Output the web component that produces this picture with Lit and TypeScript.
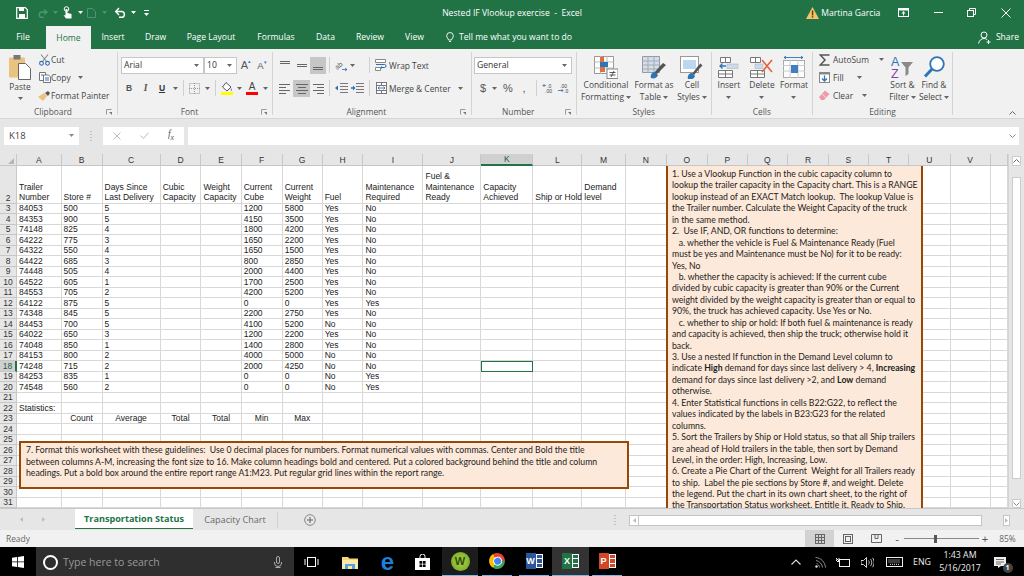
import { LitElement, html, css, svg } from "lit";
import { customElement } from "lit/decorators.js";

const ic = (w: number, h: number, body: unknown) =>
  html`<svg class="ic" width=${w} height=${h} viewBox="0 0 ${w} ${h}">${body}</svg>`;
const caret = (c = "#666") => ic(5, 3, svg`<path d="M0 0h5L2.5 3z" fill=${c}/>`);
const row = (items: [number, unknown][], cls = "") =>
  html`<div class="row ${cls}">${items.map(([w, c]) => html`<span class="slot" style="width:${w}px">${c}</span>`)}</div>`;
const tx = (t: string) => html`<span class="tx">${t}</span>`;
const vsep = html`<span class="vsep"></span>`;
const on = (c: unknown) => html`<span class="hi">${c}</span>`;

const lines3 = (ws: number[][]) =>
  ic(12, 11, svg`${ws.map(([y, x, w]) => svg`<rect x=${x} y=${y} width=${w} height="1" fill="#666"/>`)}`);
const aTop = lines3([[1, 1, 10], [3, 1, 10]]);
const aMid = lines3([[4, 1, 10], [6, 1, 10]]);
const aBot = lines3([[7, 1, 10], [9, 1, 10]]);
const aL = lines3([[1, 0, 11], [4, 0, 7], [7, 0, 11], [10, 0, 7]]);
const aC = lines3([[1, 0, 12], [4, 2, 8], [7, 0, 12], [10, 2, 8]]);
const aR = lines3([[1, 1, 11], [4, 5, 7], [7, 1, 11], [10, 5, 7]]);

const I = {
  save: ic(12, 12, svg`<path d="M.7.7h8.6l2 2v8.6H.7z" fill="none" stroke="#fff" stroke-width="1.2"/><rect x="3" y="1" width="5" height="3" fill="#fff"/><rect x="3" y="7" width="6" height="4" fill="#fff"/>`),
  redo: ic(11, 10, svg`<path d="M8 4H4a2.7 2.7 0 0 0 0 5.400h2M6 1.500 9 4 6 6.500" fill="none" stroke="#4e9474" stroke-width="1.300"/>`),
  undo: ic(12, 11, svg`<path d="M2 4.500h5.500a2.900 2.900 0 0 1 0 5.800H5M5 1 1.700 4.500 5 8" fill="none" stroke="#fff" stroke-width="1.400"/>`),
  touch: ic(11, 13, svg`<circle cx="4.500" cy="3" r="2.300" fill="none" stroke="#fff" stroke-width="1"/><path d="M3.500 3h2v4l4 1v4.500H4L1.500 9l2 .5z" fill="#fff"/>`),
  doc: ic(9, 10, svg`<path d="M.5.500h5l3 3v6h-8z" fill="none" stroke="#4e9474"/>`),
  custom: ic(5, 6, svg`<rect width="5" height="1" fill="#fff"/><path d="M0 3h5L2.500 6z" fill="#fff"/>`),
  warn: ic(13, 12, svg`<path d="M6.500 0 13 12H0z" fill="#f5c36b"/><rect x="5.800" y="3.500" width="1.500" height="5" fill="#5a4300"/><rect x="5.800" y="9.200" width="1.500" height="1.500" fill="#5a4300"/>`),
  disp: ic(11, 9, svg`<rect x=".5" y=".5" width="10" height="8" fill="none" stroke="#fff"/><rect x="1" y="1" width="9" height="1.500" fill="#fff"/><path d="M5.500 3 3.500 5.500h1.500v2h1v-2h1.500z" fill="#fff"/>`),
  min: ic(9, 1, svg`<rect width="9" height="1" fill="#fff"/>`),
  rest: ic(9, 9, svg`<rect x=".5" y="2.500" width="6" height="6" fill="none" stroke="#fff"/><path d="M2.500 2.500v-2h6v6h-2" fill="none" stroke="#fff"/>`),
  close: ic(10, 10, svg`<path d="M.5.500l9 9M9.500.500l-9 9" stroke="#fff" fill="none"/>`),
  bulb: ic(8, 11, svg`<path d="M2.500 8C2.300 6.500.7 5.800.7 3.800a3.300 3.300 0 0 1 6.600 0C7.300 5.800 5.700 6.500 5.500 8zM3 9.500h2" fill="none" stroke="#fff" stroke-width=".9"/>`),
  share: ic(14, 13, svg`<circle cx="6" cy="4" r="3" fill="none" stroke="#fff"/><path d="M.6 12.500C1 9.500 3.500 7.500 6 7.500c1.200 0 2.300.4 3.200 1.100M10.500 9v4M8.500 11h4" fill="none" stroke="#fff"/>`),
  paste: ic(22, 25, svg`<rect x="0" y="2.500" width="16" height="20" rx="1" fill="#eac37f"/><rect x="4.500" y="0" width="7" height="4.500" fill="#777"/><path d="M9.500 8.500h7l5 5v11h-12z" fill="#fff" stroke="#666"/>`),
  cut: ic(11, 12, svg`<path d="M2 .5l5.500 7M9 .5 3.500 7.500" stroke="#8a8a8a" fill="none" stroke-width="1.100"/><circle cx="2.500" cy="9.300" r="1.900" fill="none" stroke="#2a6fb5" stroke-width="1.100"/><circle cx="8.500" cy="9.300" r="1.900" fill="none" stroke="#2a6fb5" stroke-width="1.100"/>`),
  copy: ic(12, 11, svg`<path d="M.5.500h6v8h-6z" fill="#fff" stroke="#777"/><path d="M4.500 3h5l2 2v5.500h-7z" fill="#fff" stroke="#777"/><path d="M2 3h2M6 6h4M6 8h4" stroke="#2a6fb5"/>`),
  brush: ic(13, 11, svg`<path d="M0 7 6 3l3 3-4 5z" fill="#e8c27e"/><path d="M7 3l3-2 2 2-2 3z" fill="#555"/>`),
  borders: ic(11, 11, svg`<rect x=".5" y=".5" width="10" height="10" fill="none" stroke="#999" stroke-dasharray="1 1"/><path d="M5.500 0v11M0 5.500h11" stroke="#999" stroke-dasharray="1 1"/>`),
  fill: ic(12, 14, svg`<path d="M5 1.500 1.500 6 6 10l4-4z" fill="#fff" stroke="#555"/><path d="M10 7c1 1.500 1.300 2.500.5 3-.8-.500-1-1.500-.5-3z" fill="#777"/><rect y="11" width="12" height="3" fill="#ffff00"/>`),
  red: ic(12, 3, svg`<rect width="12" height="3" fill="#f00"/>`),
  orient: ic(18, 18, svg`<text x="3" y="12" font-size="7" font-family="Liberation Sans" fill="#555" transform="rotate(-40 7 10)">ab</text><path d="M10 13.500h5M13 12l2 1.500-2 1.500" stroke="#2a6fb5" fill="none" stroke-width=".8"/>`),
  wrap: ic(12, 12, svg`<path d="M.5.500h10v3H.5zM.5 8.500h5v3h-5z" fill="#fff" stroke="#888"/><path d="M1 5.500h8.500a1.500 1.500 0 0 1 0 3H6" stroke="#2a6fb5" fill="none"/><path d="M7 7 5.200 8.500 7 10z" fill="#2a6fb5"/>`),
  merge: ic(11, 12, svg`<rect x=".5" y=".5" width="10" height="11" fill="#fff" stroke="#777"/><path d="M0 3.500h11M0 8.500h11M5.500 0v3.500M5.500 8.500V12" stroke="#777"/><path d="M2 6h7M3.500 4.700 2 6l1.500 1.300M7.500 4.700 9 6 7.500 7.300" stroke="#2a6fb5" fill="none" stroke-width=".9"/>`),
  indL: ic(13, 10, svg`<path d="M5 .5h8M5 3.500h8M5 6.500h8M5 9.500h8" stroke="#777"/><path d="M0 5l3-2.500v5z" fill="#2a6fb5"/>`),
  indR: ic(13, 10, svg`<path d="M5 .5h8M5 3.500h8M5 6.500h8M5 9.500h8" stroke="#777"/><path d="M0 4.300h2V2.500L4.500 5 2 7.500V5.700H0z" fill="#2a6fb5"/>`),
  decL: ic(13, 14, svg`<text x="5" y="6.500" font-size="5" font-family="Liberation Sans" fill="#444">.0</text><text x="3" y="12" font-size="5" font-family="Liberation Sans" fill="#444">.00</text><path d="M1 4.500h3M2.500 3 1 4.500 2.500 6" stroke="#2a6fb5" fill="none" stroke-width=".8"/>`),
  decR: ic(13, 14, svg`<text x="3" y="6.500" font-size="5" font-family="Liberation Sans" fill="#444">.00</text><text x="7" y="12" font-size="5" font-family="Liberation Sans" fill="#444">.0</text><path d="M1 9.500h5M4.500 8 6 9.500 4.500 11" stroke="#2a6fb5" fill="none" stroke-width=".8"/>`),
  cond: ic(24, 23, svg`<path d="M.5.500h19v17H.5z" fill="#fff" stroke="#999"/><path d="M.5 6h19M.5 12h19M6.500 0v18M13 0v18" stroke="#bbb"/><rect x="6" y="1" width="4" height="5" fill="#e2703a"/><rect x="6" y="6" width="8" height="5" fill="#2e75b6"/><rect x="6" y="11" width="5" height="5" fill="#e2703a"/><rect x="13" y="13" width="11" height="9.500" fill="#fff" stroke="#888"/><path d="M15.500 16.500h6M15.500 19h6M20 15l-3 6" stroke="#333" fill="none" stroke-width=".8"/>`),
  table: ic(24, 23, svg`<path d="M.5.500h17v16H.5z" fill="#cfdff0" stroke="#999"/><path d="M.5 5h17M.5 9h17M.5 13h17M6 0v17M12 0v17" stroke="#a9a9a9"/><path d="M12 17l6-7 3-3 3 2-3 3-6 6z" fill="#555"/><path d="M9 22c-1-3 1-6 4-6l3 3c-1 3-4 4-7 3z" fill="#2e75b6"/>`),
  cells: ic(23, 23, svg`<rect x=".5" y=".5" width="18" height="16" fill="#fff" stroke="#999"/><rect x="3" y="4" width="13" height="9" fill="#bdd7ee"/><path d="M12 18l6-8 2.500-2.500 2 2L20 12l-6 7z" fill="#555"/><path d="M8 23c-1-3 1-6 4-6l3 3c-1 3-4 4-7 3z" fill="#2e75b6"/>`),
  insert: ic(21, 22, svg`<path d="M2.500 1.500h10v5h-10zM7.500 1.500v5M.5 14.500h14v7H.5zM.5 18h14M7.500 14.500v7" fill="#fff" stroke="#777"/><rect x="9" y="8" width="11" height="4.500" fill="#c9dcef" stroke="#aaa" stroke-width=".5"/><path d="M2 10h6M4.500 7.500 2 10l2.500 2.500" stroke="#2e75b6" fill="none" stroke-width="1.300"/>`),
  del: ic(23, 22, svg`<path d="M.5 1.500h10v5H.5zM5.500 1.500v5M.5 14.500h14v7H.5zM.5 18h14M7.500 14.500v7" fill="#fff" stroke="#777"/><rect x="5" y="8" width="8" height="4.500" fill="#c9dcef" stroke="#aaa" stroke-width=".5"/><path d="M12 4l10 12M22 4 12 16" stroke="#e2603a" stroke-width="1.500" fill="none"/>`),
  fmt: ic(22, 23, svg`<rect x=".5" y="4.500" width="21" height="17" fill="#fff" stroke="#aaa"/><path d="M7 4v18M15 4v18M0 9.500h22M0 15h22" stroke="#ccc"/><rect x="8" y="9" width="7" height="8" fill="#3f7fbf"/><path d="M1 1.500h19M3 .2 1 1.500 3 2.800M18 .2l2 1.300-2 1.300" stroke="#2e75b6" fill="none" stroke-width=".9"/>`),
  sigma: ic(11, 12, svg`<path d="M10.500 1H1.200L6 6l-4.800 5h9.300" fill="none" stroke="#555" stroke-width="1.500"/>`),
  fillI: ic(11, 11, svg`<rect x=".5" y=".5" width="10" height="10" fill="#fff" stroke="#888"/><rect x=".5" y=".5" width="10" height="2" fill="#888"/><path d="M5.500 3.500v5M3 6.500l2.500 2.500L8 6.500" stroke="#2e75b6" fill="none" stroke-width="1.300"/>`),
  clear: ic(11, 10, svg`<path d="M0 7 6 .5 10.500 4 5 10H2z" fill="#ee9aa8"/><path d="M3 4l4 3.500" stroke="#fff" fill="none" stroke-width=".6"/>`),
  sort: ic(23, 28, svg`<text x="0" y="13" font-size="12.500" font-family="Liberation Sans" fill="#2e75b6">A</text><text x="0" y="25" font-size="12.500" font-family="Liberation Sans" fill="#8a3fb0">Z</text><path d="M10 9h12l-4.500 5.500V21L14.500 23v-8.500z" fill="#8a8a8a"/>`),
  find: ic(22, 23, svg`<circle cx="14" cy="8" r="6.800" fill="#fff" stroke="#2e75b6" stroke-width="1.800"/><path d="M9 13 2 20.500" stroke="#2e75b6" stroke-width="3"/>`),
  launch: ic(6, 6, svg`<path d="M.5 5.500V.5h5" fill="none" stroke="#999"/><path d="M3 3l3 3V3z" fill="#777"/>`),
  up: ic(7, 4, svg`<path d="M.5 3.500l3-3 3 3" fill="none" stroke="#666"/>`),
  down: ic(7, 4, svg`<path d="M.5.500l3 3 3-3" fill="none" stroke="#888"/>`),
  x: ic(8, 8, svg`<path d="M.5.500l7 7M7.500.500l-7 7" stroke="#bbb" fill="none"/>`),
  check: ic(9, 7, svg`<path d="M.5 3.500 3.500 6.500 8.500.5" stroke="#bbb" fill="none"/>`),
  dots: ic(2, 10, svg`<path d="M1 0v10" stroke="#999" stroke-dasharray="1 2"/>`),
  plusC: ic(12, 12, svg`<circle cx="6" cy="6" r="5.300" fill="none" stroke="#888"/><path d="M3 6h6M6 3v6" stroke="#666"/>`),
  la: ic(3, 5, svg`<path d="M3 0v5L0 2.500z" fill="#bbb"/>`),
  ra: ic(3, 5, svg`<path d="M0 0v5l3-2.500z" fill="#bbb"/>`),
  grid: ic(10, 10, svg`<rect x=".5" y=".5" width="9" height="9" fill="none" stroke="#666"/><path d="M3.500 0v10M6.500 0v10M0 3.500h10M0 6.500h10" stroke="#666"/>`),
  page: ic(10, 10, svg`<rect x=".5" y=".5" width="9" height="9" fill="none" stroke="#666"/><rect x="2.500" y="2.500" width="5" height="5" fill="none" stroke="#666"/>`),
  brk: ic(11, 10, svg`<path d="M.5.500h10v8H.5zM4 .5v4h3v-4" fill="none" stroke="#666"/>`),
  win: ic(12, 12, svg`<path d="M0 1.700 5 1v4.500H0zM5.800.9 12 0v5.500H5.800zM0 6.300h5v4.700L0 10.300zM5.800 6.300H12V12l-6.200-.9z" fill="#fff"/>`),
  mic: ic(8, 12, svg`<rect x="2.500" y=".5" width="3" height="7" rx="1.500" fill="none" stroke="#aaa"/><path d="M.5 6v1a3.500 3.500 0 0 0 7 0V6M4 10.500V12M1.500 11.500h5" fill="none" stroke="#aaa"/>`),
  taskv: ic(15, 10, svg`<rect x="3.500" y=".5" width="8" height="9" fill="none" stroke="#fff"/><path d="M1 2v6M14 2v6" stroke="#fff" stroke-width="1"/>`),
  folder: ic(16, 13, svg`<path d="M0 1h6l1.500 1.500H16V13H0z" fill="#f5d67b"/><path d="M0 4h16v9H0z" fill="#ffe9a8"/><path d="M3 8h10v5H3z" fill="#4fa7e0"/><path d="M6 10h4v3H6z" fill="#ffe9a8"/>`),
  store: ic(15, 16, svg`<path d="M5 4V2.500a2.500 2.500 0 0 1 5 0V4" fill="none" stroke="#fff"/><path d="M0 4h15v12H0z" fill="#fff"/><path d="M4.500 7h2.700v2.700H4.500zM7.900 7h2.700v2.700H7.900zM4.500 10.400h2.700v2.700H4.500zM7.900 10.400h2.700v2.700H7.900z" fill="#000"/>`),
  upw: ic(10, 6, svg`<path d="M.5 5.500 5 1l4.500 4.500" fill="none" stroke="#ddd" stroke-width="1.100"/>`),
  wifi: ic(13, 12, svg`<path d="M11.500 11.500C11 6 7 1.700 1.500 1.500M8.500 11.500C8 8 5.500 5 2 4.500M5.500 11.500C5.300 9.500 4 8 2.500 7.500" fill="none" stroke="#8a8a8a"/><circle cx="2.500" cy="10.500" r="1.200" fill="#ddd"/>`),
  batt: ic(14, 10, svg`<rect x="3.500" y="2.500" width="10" height="7" fill="none" stroke="#eee"/><path d="M0 1l3 3-1 1L0 3zM3 1v4" stroke="#eee" fill="none"/>`),
  spk: ic(13, 11, svg`<path d="M0 3.500h2.500L5.500.5v10l-3-3H0z" fill="none" stroke="#eee" stroke-width=".9"/><path d="M7.500 3.500c1 1.200 1 2.800 0 4M9.500 2c1.700 2 1.700 5 0 7M11.500.8c2.200 2.800 2.200 6.600 0 9.400" fill="none" stroke="#eee" stroke-width=".8"/>`),
  kbd: ic(17, 10, svg`<rect x=".5" y=".5" width="16" height="9" fill="none" stroke="#eee"/><path d="M2.500 3h12M2.500 5h12M4 7.300h9" stroke="#eee" stroke-dasharray="1 1"/>`),
  notif: ic(13, 11, svg`<path d="M0 0h12v9H7l-3 2V9H0z" fill="#eee"/><path d="M2 2.500h8M2 5h8M2 7h5" stroke="#333" stroke-width=".7"/>`),
};

const ROWS = `84053 500 5 1200 5800 Yes No
84353 900 5 4150 3500 Yes No
74148 825 4 1800 4200 Yes No
64222 775 3 1650 2200 Yes No
64322 550 4 1650 1500 Yes No
64422 685 3 800 2850 Yes No
74448 505 4 2000 4400 Yes No
64522 605 1 1700 2500 Yes No
84553 705 2 4200 5200 Yes No
64122 875 5 0 0 Yes Yes
74348 845 5 2200 2750 Yes No
84453 700 5 4100 5200 No No
64022 650 3 1200 2200 Yes No
74048 850 1 1400 2800 Yes No
84153 800 2 4000 5000 No No
74248 715 2 2000 4250 No No
84253 835 1 0 0 No Yes
74548 560 2 0 0 No Yes`.split("\n").map((l) => l.split(" "));

const COLS = "A B C D E F G H I J K L M N O P Q R S T U V".split(" ").concat("");
const HEAD: Record<string, string> = {
  A: "Trailer\nNumber", B: "Store #", C: "Days Since\nLast Delivery", D: "Cubic\nCapacity", E: "Weight\nCapacity",
  F: "Current\nCube", G: "Current\nWeight", H: "Fuel", I: "Maintenance\nRequired", J: "Fuel &\nMaintenance\nReady",
  K: "Capacity\nAchieved", L: "Ship or Hold", M: "Demand\nlevel",
};
const STATS: Record<string, string> = { B: "Count", C: "Average", D: "Total", E: "Total", F: "Min", G: "Max" };
const DATA_COLS = ["A", "B", "C", "F", "G", "H", "I"];

const NOTE_RIGHT: unknown[] = [
  "1. Use a Vlookup Function in the cubic capacity column to",
  "lookup the trailer capacity in the Capacity chart. This is a RANGE",
  "lookup instead of an EXACT Match lookup.  The lookup Value is",
  "the Trailer number. Calculate the Weight Capacity of the truck",
  "in the same method.",
  "2.  Use IF, AND, OR functions to determine:",
  "   a. whether the vehicle is Fuel & Maintenance Ready (Fuel",
  "must be yes and Maintenance must be No) for it to be ready:",
  "Yes, No",
  "   b. whether the capacity is achieved: If the current cube",
  "divided by cubic capacity is greater than 90% or the Current",
  "weight divided by the weight capacity is greater than or equal to",
  "90%, the truck has achieved capacity. Use Yes or No.",
  "   c. whether to ship or hold: If both fuel & maintenance is ready",
  "and capacity is achieved, then ship the truck; otherwise hold it",
  "back.",
  "3. Use a nested If function in the Demand Level column to",
  html`indicate <b>High</b> demand for days since last delivery > 4, <b>Increasing</b>`,
  html`demand for days since last delivery >2, and <b>Low</b> demand`,
  "otherwise.",
  "4. Enter Statistical functions in cells B22:G22, to reflect the",
  "values indicated by the labels in B23:G23 for the related",
  "columns.",
  "5. Sort the Trailers by Ship or Hold status, so that all Ship trailers",
  "are ahead of Hold trailers in the table, then sort by Demand",
  "Level, in the order: High, Increasing, Low.",
  "6. Create a Pie Chart of the Current  Weight for all Trailers ready",
  "to ship.  Label the pie sections by Store #, and weight. Delete",
  "the legend. Put the chart in its own chart sheet, to the right of",
  "the Transportation Status worksheet. Entitle it, Ready to Ship.",
];
const NOTE_BOTTOM = [
  "7. Format this worksheet with these guidelines:  Use 0 decimal places for numbers. Format numerical values with commas. Center and Bold the title",
  "between columns A-M, increasing the font size to 16. Make column headings bold and centered. Put a colored background behind the title and column",
  "headings. Put a bold box around the entire report range A1:M23. Put regular grid lines within the report range.",
];

@customElement("app-root")
export class AppRoot extends LitElement {
  static styles = css`
    * { box-sizing: border-box; }
    :host { display: flex; flex-direction: column; width: 1024px; height: 576px; overflow: hidden; background: #f1f1f1;
      font-family: "Open Sans", "Noto Sans", sans-serif; font-size: 8.4px; color: #444; }
    .ic { display: block; flex: none; }
    .row { display: flex; align-items: center; }
    .slot { display: flex; align-items: center; justify-content: center; flex: none; height: 100%; }
    .tx { margin-right: auto; white-space: nowrap; }
    .vsep { width: 1px; height: 16px; background: #d0d0d0; }

    .title { height: 25px; background: #217346; color: #fff; display: grid; grid-template-columns: 1fr auto 1fr; align-items: center; font-size: 8.6px; }
    .title .row { height: 25px; }
    .title .doc { white-space: pre; }
    .title-r { justify-content: flex-end; }
    .tabs { height: 24px; background: #217346; color: #fff; display: flex; align-items: flex-end; font-size: 8.6px; }
    .tab { height: 24px; flex: none; display: flex; align-items: center; justify-content: center; }
    .tab.home { background: #f1f1f1; color: #217346; height: 23px; }
    .tell { flex: 1; display: flex; align-items: center; height: 24px; }
    .tell .bulb { margin: 0 5px 0 12px; }
    .share { display: flex; align-items: center; height: 24px; gap: 4px; padding-right: 5px; }

    .ribbon { height: 70px; flex: none; background: #f1f1f1; border-bottom: 1px solid #d6d6d6; padding-top: 3px; display: flex; }
    .group { height: 63px; border-right: 1px solid #d4d4d4; flex: none; display: flex; flex-direction: column; }
    .gbody { height: 54px; flex: none; display: flex; }
    .glabel { height: 9px; display: flex; line-height: 12px; color: #555; }
    .glabel span { flex: 1; text-align: center; }
    .glabel .launch { flex: none; width: 11px; height: 12px; display: flex; align-items: center; }
    .pastecol { width: 38px; padding-left: 2px; display: flex; flex-direction: column; align-items: center; padding-top: 3px; flex: none; }
    .pastecol .t { line-height: 12px; margin-top: 1px; }
    .pastecol .c { margin-top: 4px; }
    .stack { display: flex; flex-direction: column; gap: 2.75px; }
    .stack .row { height: 15px; }
    .two { padding-top: 5px; display: flex; flex-direction: column; gap: 6.5px; }
    .two .row { height: 16.500px; }
    .combo { height: 16.500px; background: #fff; border: 1px solid #c6c6c6; display: flex; align-items: center; justify-content: space-between; padding: 0 4px 0 2px; color: #333; flex: none; font-size: 8.6px; }
    .hi { background: #c6c6c6; align-self: stretch; width: 100%; display: flex; align-items: center; justify-content: center; }
    .b { font-family: "Liberation Sans", sans-serif; font-weight: 700; font-size: 8.5px; color: #555; }
    .i { font-family: "Liberation Serif", serif; font-style: italic; font-weight: 700; font-size: 9.5px; color: #555; }
    .u { font-family: "Liberation Sans", sans-serif; text-decoration: underline; font-size: 8.5px; color: #333; font-weight: 700; }
    .bigA { font-family: "Liberation Sans", sans-serif; font-size: 11px; color: #555; display: flex; align-items: flex-start; }
    .bigA.s { font-size: 9.5px; }
    .bigA i { font-style: normal; font-size: 5px; line-height: 5px; color: #2e75b6; }
    .colA { display: flex; flex-direction: column; align-items: center; font-family: "Liberation Sans", sans-serif; font-size: 10px; line-height: 10px; color: #444; }
    .num { font-size: 11px; color: #555; font-family: "Liberation Sans", sans-serif; }
    .big { flex: none; display: flex; flex-direction: column; align-items: center; padding-top: 3px; }
    .big .ico { height: 24px; display: flex; align-items: center; }
    .big .t { line-height: 12px; white-space: nowrap; display: flex; align-items: center; gap: 2px; min-height: 12px; }
    .collapse { flex: 1; display: flex; justify-content: flex-end; align-items: flex-end; padding: 0 8px 3px 0; height: 66px; }

    .fbar { height: 35px; flex: none; background: #e6e6e6; padding-top: 7.500px; display: flex; align-items: flex-start; }
    .fbox { height: 18.500px; background: #fff; flex: none; display: flex; align-items: center; }
    .namebox { margin-left: 4px; width: 75px; justify-content: space-between; padding: 0 5px; font-size: 9.5px; color: #444; }
    .dots { width: 24px; height: 18.500px; display: flex; align-items: center; justify-content: center; flex: none; }
    .fxbox { width: 81px; }
    .fxbox span.fx { font-family: "Liberation Serif", serif; font-style: italic; font-size: 9.5px; color: #555; }
    .input { flex: 1; margin: 0 5px 0 3.500px; justify-content: flex-end; padding-right: 3px; }

    .sheet { height: 354px; flex: none; display: flex; background: #fff; }
    .gridwrap { position: relative; width: 1008px; height: 354px; overflow: hidden; flex: none; }
    .grid { display: grid; width: 1008px; height: 354px;
      grid-template-columns: 17px 44.5px 41px 58.2px 40.8px 40.2px 41px 40px 40.8px 60px 57.8px 52px 49px 43.7px 40.7px 41.3px 39.7px 40.6px 40.7px 40px 40.3px 41.4px 40px 17.3px;
      grid-template-rows: 12px 37.5px repeat(29, 10.5px);
      font-family: "Liberation Sans", Arial, sans-serif; font-size: 8.5px; color: #222; }
    .cell { border-right: 1px solid #d8d8d8; border-bottom: 1px solid #d8d8d8; padding-left: 2px; display: flex; align-items: center; white-space: nowrap; line-height: 10.5px; min-width: 0; }
    .cell.h2 { align-items: flex-end; white-space: pre; }
    .cell.ctr { justify-content: center; padding-left: 0; }
    .ch { background: #e6e6e6; border-right: 1px solid #c8c8c8; border-bottom: 1px solid #c6c6c6; display: flex; align-items: center; justify-content: center; color: #333; line-height: 10px; }
    .ch.act { background: #d0d0d0; border-bottom: 2px solid #217346; color: #1d5c3a; }
    .rh { background: #e6e6e6; border-right: 1px solid #c8c8c8; border-bottom: 1px solid #c6c6c6; display: flex; align-items: center; justify-content: center; color: #333; line-height: 10px; }
    .rh.h2 { align-items: flex-end; }
    .rh.act { background: #d0d0d0; border-right: 2px solid #217346; color: #1d5c3a; }
    .sel { outline: 1.500px solid #217346; outline-offset: -1px; position: relative; }
    .corner { padding: 3px 2px 0 0; justify-content: flex-end; }
    .note { position: absolute; background: #fde9d9; border: 2px solid #974706; font-family: Lato, "Open Sans", sans-serif; font-size: 8.7px; color: #222; white-space: pre; }
    .note.right { left: 666px; top: 12px; width: 257px; height: 342px; border-top: none; border-bottom: none; padding: 2px 0 0 4px; line-height: 11.440px; }
    .note.right div:last-child { line-height: 9px; }
    .note.bottom { left: 19px; top: 287px; width: 610px; height: 48px; padding: 1.200px 0 0 5px; line-height: 11.600px; }
    .note b { font-weight: 700; }
    .vscroll { width: 16px; flex: none; background: #e6e6e6; border-left: 1px solid #d4d4d4; padding: 2px 3px 0 3px; display: flex; flex-direction: column; }
    .vbtn { height: 10px; background: #fff; border: 1px solid #ccc; display: flex; align-items: center; justify-content: center; flex: none; }
    .vthumb { margin-top: 11px; height: 302px; background: #fff; border: 1px solid #ccc; flex: none; }
    .vgap { flex: 1; }
    .vbtn.last { margin-bottom: 0; height: 9px; }

    .tabsbar { height: 22px; flex: none; background: #e6e6e6; border-top: 1px solid #c8c8c8; display: flex; align-items: stretch; }
    .sheettab { flex: none; display: flex; align-items: center; justify-content: center; font-size: 9.100px; white-space: nowrap; color: #666; }
    .sheettab.on { background: #fff; color: #217346; font-weight: 700; height: 19.500px; border-bottom: 1.500px solid #217346; }
    .hs { margin-top: 6px; height: 11px; display: flex; flex: none; width: 381px; margin-left: 0; }
    .hbtn { background: #fff; border: 1px solid #c4c4c4; width: 10px; display: flex; align-items: center; justify-content: center; flex: none; }
    .htrack { width: 343px; background: #fff; border: 1px solid #c4c4c4; border-left: none; flex: none; }
    .hgap { flex: 1; }
    .status { height: 17px; flex: none; background: #f1f1f1; display: flex; align-items: center; color: #666; padding-left: 6px; }
    .status .ready { flex: 1; }
    .status .row { height: 17px; }
    .view { height: 17px; }
    .view.on { background: #d2d2d2; }
    .slider { width: 75px; height: 1px; background: #888; display: flex; align-items: center; }
    .thumb { width: 3px; height: 8px; background: #555; margin-left: 30px; flex: none; }
    .pm { font-size: 11px; color: #555; font-family: "Liberation Sans", sans-serif; }

    .task { height: 30px; flex: none; background: #000; display: flex; align-items: stretch; color: #fff; }
    .start { width: 36px; display: flex; align-items: center; justify-content: center; flex: none; }
    .search { width: 258px; background: #2f2f2f; display: flex; align-items: center; padding-left: 7px; flex: none; color: #999; font-size: 11px; }
    .ring { width: 15px; height: 15px; border: 2px solid #fff; border-radius: 50%; margin-right: 5px; flex: none; }
    .search .stext { flex: 1; font-family: "Open Sans", sans-serif; font-size: 10.500px; white-space: nowrap; }
    .search .m { width: 28px; display: flex; justify-content: center; flex: none; margin-right: 2px; }
    .tb { flex: none; display: flex; align-items: center; justify-content: center; }
    .tb.run { border-bottom: 2px solid #76b9ed; }
    .tb.w { background: #1c1c1c; }
    .tb.x { background: #333; }
    .gap { flex: none; }
    .edge { font-family: "Liberation Sans", sans-serif; font-size: 24px; font-weight: 700; color: #1e7fd8; line-height: 20px; }
    .webroot { width: 19px; height: 19px; border-radius: 50%; background: radial-gradient(circle, #9bc53d 30%, #6f9e22 100%); display: flex; align-items: center; justify-content: center; font-family: "Liberation Sans", sans-serif; font-size: 11px; font-weight: 700; color: #2f4d08; }
    .chrome { width: 16px; height: 16px; border-radius: 50%; background: conic-gradient(#ea4335 0 120deg, #34a853 0 240deg, #fbbc05 0 360deg); transform: rotate(-30deg); display: flex; align-items: center; justify-content: center; }
    .chrome i { width: 7px; height: 7px; border-radius: 50%; background: #4285f4; border: 1px solid #fff; box-sizing: content-box; display: block; }
    .office { display: flex; height: 16px; align-items: stretch; font-family: "Liberation Sans", sans-serif; font-weight: 700; font-size: 9px; }
    .office .l { width: 10px; display: flex; align-items: center; justify-content: center; color: #fff; }
    .office .s { width: 7px; margin: 1px 0; display: flex; flex-direction: column; gap: 1px; padding: 1px; background: #fff; }
    .office .s i { flex: 1; display: block; }
    .word .l { background: #2b579a; } .word .s i { background: #2b579a; }
    .excel .l { background: #217346; } .excel .s i { background: #217346; }
    .ppt .l { background: #d24726; } .ppt .s i { background: #d24726; }
    .tray { margin-left: auto; display: flex; align-items: stretch; }
    .tray .row { height: 30px; }
    .clock { display: flex; flex-direction: column; align-items: center; line-height: 13px; font-size: 8.800px; color: #eee; }
    .eng { font-size: 8.800px; color: #eee; }
    .nt { display: flex; flex-direction: column; position: relative; }
    .badge { position: absolute; right: -6px; bottom: -5px; width: 10px; height: 10px; border-radius: 50%; background: #444; font-size: 7px; line-height: 10px; text-align: center; color: #fff; font-weight: 700; }
  `;

  private big(w: number, icon: unknown, l1: string, l2: string, car = true) {
    return html`<div class="big" style="width:${w}px"><span class="ico">${icon}</span><span class="t">${l1}</span><span class="t">${l2}${car ? caret() : ""}</span></div>`;
  }

  private label(t: string, launch: boolean) {
    return html`<div class="glabel"><span>${t}</span>${launch ? html`<span class="launch">${I.launch}</span>` : ""}</div>`;
  }

  private group(w: number, body: unknown, t: string, launch = false) {
    return html`<section class="group" style="width:${w}px"><div class="gbody">${body}</div>${this.label(t, launch)}</section>`;
  }

  private titleBar() {
    return html`<header class="title">
      ${row([[10, ""], [23, I.save], [20, I.redo], [5, caret("#4e9474")], [18, I.touch], [8, caret("#fff")], [14, I.doc], [12, caret("#4e9474")], [20, I.undo], [6, caret("#fff")], [20, I.custom]])}
      <span class="doc">Nested IF Vlookup exercise  -  Excel</span>
      ${row([[14, I.warn], [71, html`<span class="tx">&nbsp;Martina Garcia</span>`], [26, I.disp], [5, ""], [34, I.min], [32, I.rest], [37, I.close]], "title-r")}
    </header>`;
  }

  private tabs() {
    const t: [string, number][] = [["File", 46], ["Home", 45], ["Insert", 44], ["Draw", 41], ["Page Layout", 70], ["Formulas", 60], ["Data", 39], ["Review", 50], ["View", 39]];
    return html`<nav class="tabs">
      ${t.map(([n, w]) => html`<span class="tab ${n === "Home" ? "home" : ""}" style="width:${w}px">${n}</span>`)}
      <span class="tell"><span class="bulb">${I.bulb}</span>Tell me what you want to do</span>
      <span class="share">${I.share}Share</span>
    </nav>`;
  }

  private ribbon() {
    const clip = html`<div class="pastecol">${I.paste}<span class="t">Paste</span><span class="c">${caret()}</span></div>
      <div class="stack">
        ${row([[13, I.cut], [60, tx("Cut")]])}
        ${row([[13, I.copy], [26, tx("Copy")], [6, caret()]])}
        ${row([[13, I.brush], [60, tx("Format Painter")]])}
      </div>`;
    const font = html`<div class="two">
        <div class="row"><span class="slot" style="width:3px"></span>
          <span class="combo" style="width:83px">Arial${caret()}</span><span class="combo" style="width:33px">10${caret()}</span>
          <span class="slot" style="width:1px"></span>
          <span class="slot" style="width:16px"><span class="bigA">A<i>▴</i></span></span>
          <span class="slot" style="width:16px"><span class="bigA s">A<i>▾</i></span></span></div>
        ${row([[3, ""], [16, html`<span class="b">B</span>`], [17, html`<span class="i">I</span>`], [16, html`<span class="u">U</span>`], [10, caret()], [6, vsep], [17, I.borders], [8, caret()], [9, vsep], [14, I.fill], [10, caret()], [16, html`<span class="colA">A${I.red}</span>`], [10, caret()]])}
      </div>`;
    const align = html`<div class="two">
        ${row([[4, ""], [16, aTop], [17, aMid], [16, on(aBot)], [7, vsep], [16, I.orient], [6, caret()], [11, ""], [6, vsep], [17, I.wrap], [60, tx("Wrap Text")]])}
        ${row([[4, ""], [16, aL], [17, on(aC)], [16, aR], [7, vsep], [16, I.indL], [16, I.indR], [8, vsep], [16, I.merge], [69, tx("Merge & Center")], [5, caret()]])}
      </div>`;
    const num = html`<div class="two">
        <div class="row"><span class="slot" style="width:2.300px"></span><span class="combo" style="width:98px">General${caret()}</span></div>
        ${row([[3.3, ""], [16, html`<span class="num">$</span>`], [8, caret()], [18, html`<span class="num">%</span>`], [14, html`<span class="num">,</span>`], [11, vsep], [13, I.decL], [18, I.decR]])}
      </div>`;
    const styles = html`${this.big(58.6, I.cond, "Conditional", "Formatting")}${this.big(37.4, I.table, "Format as", "Table")}${this.big(38.6, I.cells, "Cell", "Styles")}`;
    const cells = html`${this.big(34.3, I.insert, "Insert", "")}${this.big(32, I.del, "Delete", "")}${this.big(32, I.fmt, "Format", "")}`;
    const edit = html`<div class="stack" style="width:75px">
        ${row([[4, ""], [16, I.sigma], [46, tx("AutoSum")], [5, caret()]])}
        ${row([[4, ""], [16, I.fillI], [40, html`<span class="tx">Fill</span><span style="margin:0 auto 0 3px">${caret()}</span>`]])}
        ${row([[4, ""], [16, I.clear], [40, html`<span class="tx">Clear</span><span style="margin:0 auto 0 3px">${caret()}</span>`]])}
      </div>
      ${this.big(29, I.sort, "Sort &", "Filter")}${this.big(34, I.find, "Find &", "Select")}`;
    return html`<div class="ribbon">
      ${this.group(118, clip, "Clipboard", true)}
      ${this.group(155, font, "Font", true)}
      ${this.group(198.7, align, "Alignment", true)}
      ${this.group(105, num, "Number", true)}
      ${this.group(135, styles, "Styles")}
      ${this.group(101.3, cells, "Cells")}
      ${this.group(140, edit, "Editing")}
      <div class="collapse">${I.up}</div>
    </div>`;
  }

  private fbar() {
    return html`<div class="fbar">
      <div class="fbox namebox">K18${caret("#888")}</div>
      <div class="dots">${I.dots}</div>
      <div class="fbox fxbox">${row([[28, I.x], [27, I.check], [26, html`<span class="fx">f<sub>x</sub></span>`]])}</div>
      <div class="fbox input">${I.down}</div>
    </div>`;
  }

  private grid() {
    const out: unknown[] = [];
    out.push(html`<div class="ch corner"><svg class="ic" width="6" height="6"><path d="M6 0v6H0z" fill="#b5b5b5"/></svg></div>`);
    COLS.forEach((c) => out.push(html`<div class="ch ${c === "K" ? "act" : ""}">${c}</div>`));
    for (let r = 2; r <= 31; r++) {
      out.push(html`<div class="rh ${r === 18 ? "act" : ""} ${r === 2 ? "h2" : ""}">${r}</div>`);
      COLS.forEach((c) => {
        let t = "";
        let cls = "";
        if (r === 2) { t = HEAD[c] ?? ""; cls = "h2"; }
        else if (r >= 3 && r <= 20) {
          const i = DATA_COLS.indexOf(c);
          if (i >= 0) t = ROWS[r - 3][i];
        } else if (r === 22 && c === "A") t = "Statistics:";
        else if (r === 23 && STATS[c]) { t = STATS[c]; cls = "ctr"; }
        if (r === 18 && c === "K") cls = "sel";
        out.push(html`<div class="cell ${cls}">${t}</div>`);
      });
    }
    return html`<div class="grid">${out}</div>`;
  }

  private sheet() {
    return html`<div class="sheet">
      <div class="gridwrap">
        ${this.grid()}
        <aside class="note right">${NOTE_RIGHT.map((l) => html`<div>${l}</div>`)}</aside>
        <aside class="note bottom">${NOTE_BOTTOM.map((l) => html`<div>${l}</div>`)}</aside>
      </div>
      <div class="vscroll">
        <div class="vbtn">${I.up}</div>
        <div class="vthumb"></div>
        <div class="vgap"></div>
        <div class="vbtn last">${I.down}</div>
      </div>
    </div>`;
  }

  private tabsbar() {
    return html`<div class="tabsbar">
      ${row([[10, ""], [22, I.la], [22, I.ra], [21, ""]])}
      <span class="sheettab on" style="width:118px">Transportation Status</span>
      <span class="sheettab" style="width:84px">Capacity Chart</span>
      ${row([[1, html`<span class="vsep"></span>`], [64, I.plusC]])}
      ${row([[272, ""], [2, I.dots], [13, ""]])}
      <div class="hs">
        <span class="hbtn">${I.la}</span>
        <span class="htrack"></span>
        <span class="hgap"></span>
        <span class="hbtn" style="width:7px">${I.ra}</span>
      </div>
    </div>`;
  }

  private status() {
    return html`<footer class="status">
      <span class="ready">Ready</span>
      ${row([
        [29, html`<span class="view on slot" style="width:29px">${I.grid}</span>`],
        [28, I.page], [28, I.brk],
        [14, html`<span class="pm">-</span>`],
        [75, html`<span class="slider"><span class="thumb"></span></span>`],
        [12, html`<span class="pm">+</span>`],
        [33, "85%"],
      ])}
    </footer>`;
  }

  private taskbar() {
    const office = (cls: string, l: string) => html`<span class="office ${cls}"><span class="l">${l}</span><span class="s"><i></i><i></i><i></i></span></span>`;
    return html`<div class="task">
      <div class="start">${I.win}</div>
      <div class="search"><span class="ring"></span><span class="stext">Type here to search</span><span class="m">${I.mic}</span></div>
      <div class="tb" style="width:34px">${I.taskv}</div>
      <div class="tb" style="width:44px">${I.folder}</div>
      <div class="tb" style="width:31px"><span class="edge">e</span></div>
      <div class="tb" style="width:39px">${I.store}</div>
      <div class="tb run w" style="width:36px"><span class="webroot">W</span></div>
      <span class="gap" style="width:4px"></span>
      <div class="tb run" style="width:30px"><span class="chrome"><i></i></span></div>
      <span class="gap" style="width:7px"></span>
      <div class="tb run" style="width:30px">${office("word", "W")}</div>
      <span class="gap" style="width:3px"></span>
      <div class="tb run x" style="width:37px">${office("excel", "X")}</div>
      <span class="gap" style="width:3px"></span>
      <div class="tb run" style="width:30px">${office("ppt", "P")}</div>
      <div class="tray">
        ${row([[24, I.upw], [25, I.wifi], [20, I.batt], [28, I.spk], [26, I.kbd], [30, html`<span class="eng">ENG</span>`],
          [46, html`<span class="clock"><span>1:43 AM</span><span>5/16/2017</span></span>`],
          [34, html`<span class="nt">${I.notif}<span class="badge">1</span></span>`], [7, ""]])}
      </div>
    </div>`;
  }

  render() {
    return html`${this.titleBar()}${this.tabs()}${this.ribbon()}${this.fbar()}${this.sheet()}${this.tabsbar()}${this.status()}${this.taskbar()}`;
  }
}
